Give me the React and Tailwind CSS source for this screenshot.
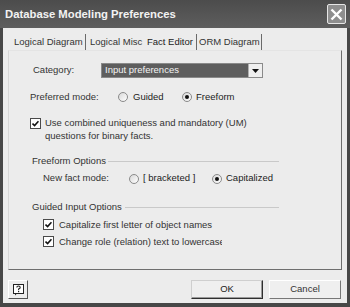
import React from 'react';

const font = { fontFamily: '"Liberation Sans", Arial, sans-serif' };

function Radio({ checked }) {
  return (
    <span className="relative inline-flex h-[10px] w-[10px] shrink-0 items-center justify-center rounded-full border border-[#8a8a8a] bg-gradient-to-br from-[#d8d8d8] to-white">
      {checked && <span className="h-[4px] w-[4px] rounded-full bg-[#111]" />}
    </span>
  );
}

function Check() {
  return (
    <span className="inline-flex h-[11px] w-[11px] shrink-0 items-center justify-center border border-[#4a4a4a] bg-white">
      <svg width="7" height="7" viewBox="0 0 7 7">
        <path d="M0.5 3.5 L2.6 5.6 L6.5 1.2" fill="none" stroke="#111" strokeWidth="1.6" />
      </svg>
    </span>
  );
}

function Group({ label, lineStart }) {
  return (
    <div className="flex h-[13px] items-center">
      <span className="ml-[23px] whitespace-nowrap text-[#333]" style={{ width: lineStart }}>{label}</span>
      <span className="mr-[62px] h-px flex-1 bg-[#c9c9c9]" />
    </div>
  );
}

export default function App() {
  return (
    <div className="flex h-[307px] w-[350px] flex-col bg-[#474747] text-[9.5px] text-[#222]" style={font}>
      {/* title bar */}
      <div className="flex h-[28px] items-center justify-between bg-gradient-to-b from-[#4c4c4c] to-[#5e5e5e] pl-[5px] pr-[4px]">
        <span className="text-[11.3px] font-bold text-[#f2f2f2]">Database Modeling Preferences</span>
        <span className="flex h-[20px] w-[19px] items-center justify-center rounded-[2px] border border-[#e6e6e6] bg-[#8e8e8e]">
          <svg width="13" height="13" viewBox="0 0 13 13">
            <path d="M1.5 1.5 L11.5 11.5 M11.5 1.5 L1.5 11.5" stroke="#fff" strokeWidth="2.4" />
          </svg>
        </span>
      </div>

      {/* body */}
      <div className="mx-[3px] mb-[4px] flex flex-1 flex-col bg-[#ececec]">
        {/* tabs */}
        <div className="flex h-[22px] items-end whitespace-nowrap pl-[5px] pt-[6px]">
          <div className="flex h-[16px] w-[78px] shrink-0 items-center border-r border-[#6a6a6a] pl-[6px] text-[#333]">Logical Diagram</div>
          <div className="flex h-[16px] w-[58px] shrink-0 items-center pl-[4px] text-[#333]">Logical Misc</div>
          <div className="flex h-[16px] w-[53px] shrink-0 items-center border-r border-[#6a6a6a] pl-[3px] text-[#222]">Fact Editor</div>
          <div className="flex h-[16px] w-[65px] shrink-0 items-center border-r border-[#6a6a6a] pl-[2px] text-[#333]">ORM Diagram</div>
        </div>

        {/* panel */}
        <div className="mx-[5px] flex h-[220px] flex-col border-b border-l border-r border-t border-b-[#6e6e6e] border-l-[#d6d6d6] border-r-[#6e6e6e] border-t-[#e4e4e4] pt-[12px]">
          <div className="flex h-[15px] items-center">
            <span className="ml-[24px] w-[68px] text-[#333]">Category:</span>
            <div className="flex h-[15px] w-[162px] items-stretch border border-[#8a8a8a] bg-[#5e5e5e]">
              <span className="flex flex-1 items-center pl-[3px] text-[#f4f4f4]">Input preferences</span>
              <span className="flex w-[14px] items-center justify-center border-l border-[#b0b0b0] bg-[#efefef]">
                <svg width="7" height="4" viewBox="0 0 7 4">
                  <path d="M0 0 H7 L3.5 4 Z" fill="#111" />
                </svg>
              </span>
            </div>
          </div>

          <div className="mt-[12px] flex h-[14px] items-center">
            <span className="ml-[21px] w-[88px] text-[#333]">Preferred mode:</span>
            <span className="flex w-[64px] items-center gap-[5px]"><Radio /><span>Guided</span></span>
            <span className="flex items-center gap-[4px]"><Radio checked /><span>Freeform</span></span>
          </div>

          <div className="mt-[12px] flex">
            <span className="ml-[21px] mt-[1px]"><Check /></span>
            <span className="ml-[4px] leading-[13px] text-[#333]">
              Use combined uniqueness and mandatory (UM)<br />questions for binary facts.
            </span>
          </div>

          <div className="mt-[13px]"><Group label="Freeform Options" lineStart="76px" /></div>

          <div className="mt-[4px] flex h-[13px] items-center">
            <span className="ml-[34px] w-[86px] text-[#333]">New fact mode:</span>
            <span className="flex w-[83px] items-center gap-[4px]"><Radio /><span>[ bracketed ]</span></span>
            <span className="flex items-center gap-[4px]"><Radio checked /><span>Capitalized</span></span>
          </div>

          <div className="mt-[16px]"><Group label="Guided Input Options" lineStart="93px" /></div>

          <div className="mt-[5px] flex h-[13px] items-center">
            <span className="ml-[34px]"><Check /></span>
            <span className="ml-[5px] whitespace-nowrap text-[#333]">Capitalize first letter of object names</span>
          </div>
          <div className="mt-[4px] flex h-[13px] items-center">
            <span className="ml-[34px]"><Check /></span>
            <span className="ml-[5px] w-[163px] overflow-hidden whitespace-nowrap text-[#333]">Change role (relation) text to lowercase</span>
          </div>
        </div>

        {/* buttons */}
        <div className="mt-[10px] flex h-[19px] items-start pl-[5px] pr-[6px]">
          <span className="flex h-[19px] w-[20px] items-center justify-center border border-b-[#555] border-l-white border-r-[#555] border-t-white bg-[#ededed]">
            <svg width="11" height="12" viewBox="0 0 11 12">
              <rect x="0.5" y="0.5" width="10" height="9" fill="#fff" stroke="#222" />
              <path d="M3.8 3.4 Q3.8 2 5.5 2 Q7.2 2 7.2 3.4 Q7.2 4.4 5.6 5 V6.3" fill="none" stroke="#222" strokeWidth="1.1" />
              <rect x="5" y="7" width="1.2" height="1.2" fill="#222" />
              <path d="M2 9.5 L2 11.5 L4 9.5 Z" fill="#222" />
            </svg>
          </span>
          <span className="flex-1" />
          <span className="flex h-[19px] w-[72px] items-center justify-center border border-b-[#2f2f2f] border-l-[#cfcfcf] border-r-[#2f2f2f] border-t-[#cfcfcf] bg-[#efefef] text-[#222] shadow-[inset_-1px_-1px_0_#9a9a9a]">OK</span>
          <span className="ml-[6px] flex h-[19px] w-[72px] items-center justify-center border border-b-[#777] border-l-white border-r-[#777] border-t-white bg-[#efefef] text-[#333]">Cancel</span>
        </div>
      </div>
    </div>
  );
}
